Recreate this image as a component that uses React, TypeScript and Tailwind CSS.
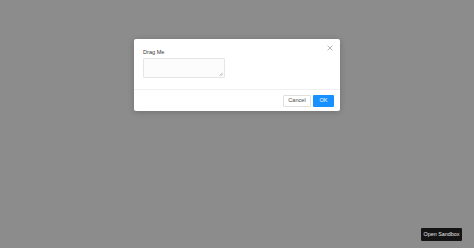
export default function App() {
  return (
    <div
      className="relative min-h-[248px] w-full bg-[#8c8c8c]"
      style={{ fontFamily: '"Liberation Sans", Arial, sans-serif' }}
    >
      <div className="flex justify-center pt-[39px]">
        <div className="relative w-[206px] rounded-[2px] bg-white shadow-[0_1px_6px_rgba(0,0,0,0.2)]">
          <button className="absolute right-[7px] top-[6px] flex h-[6px] w-[6px] items-center justify-center text-[#8c8c8c]">
            <svg width="6" height="6" viewBox="0 0 10 10" fill="none" stroke="currentColor" strokeWidth="1.1">
              <path d="M1 1L9 9M9 1L1 9" />
            </svg>
          </button>
          <div className="px-[9px] pb-[11px] pt-[9px]">
            <div className="text-[5.6px] leading-[9px] text-[#3a3a3a]">Drag Me</div>
            <div className="relative mt-[1px] h-[20px] w-[82px] rounded-[1px] border border-[#e6e6e6] bg-[#fcfcfc]">
              <svg className="absolute bottom-[1px] right-[1px]" width="4" height="4" viewBox="0 0 4 4" stroke="#9a9a9a" strokeWidth="0.6">
                <path d="M0.5 3.8L3.8 0.5M2 3.8L3.8 2" />
              </svg>
            </div>
          </div>
          <div className="flex justify-end gap-[2px] border-t border-[#f0f0f0] px-[6px] pb-[4px] pt-[5px]">
            <button className="h-[12px] w-[28px] rounded-[1px] border border-[#e0e0e0] bg-white text-[5.6px] leading-none text-[#4a4a4a]">
              Cancel
            </button>
            <button className="h-[12px] w-[21px] rounded-[1px] bg-[#1890ff] text-[5.6px] leading-none text-white">
              OK
            </button>
          </div>
        </div>
      </div>
      <div className="absolute bottom-[7px] right-[12px] flex h-[13px] w-[41px] items-center justify-center rounded-[1px] bg-[#141414] text-[5.4px] text-[#e8e8e8]">
        Open Sandbox
      </div>
    </div>
  );
}
